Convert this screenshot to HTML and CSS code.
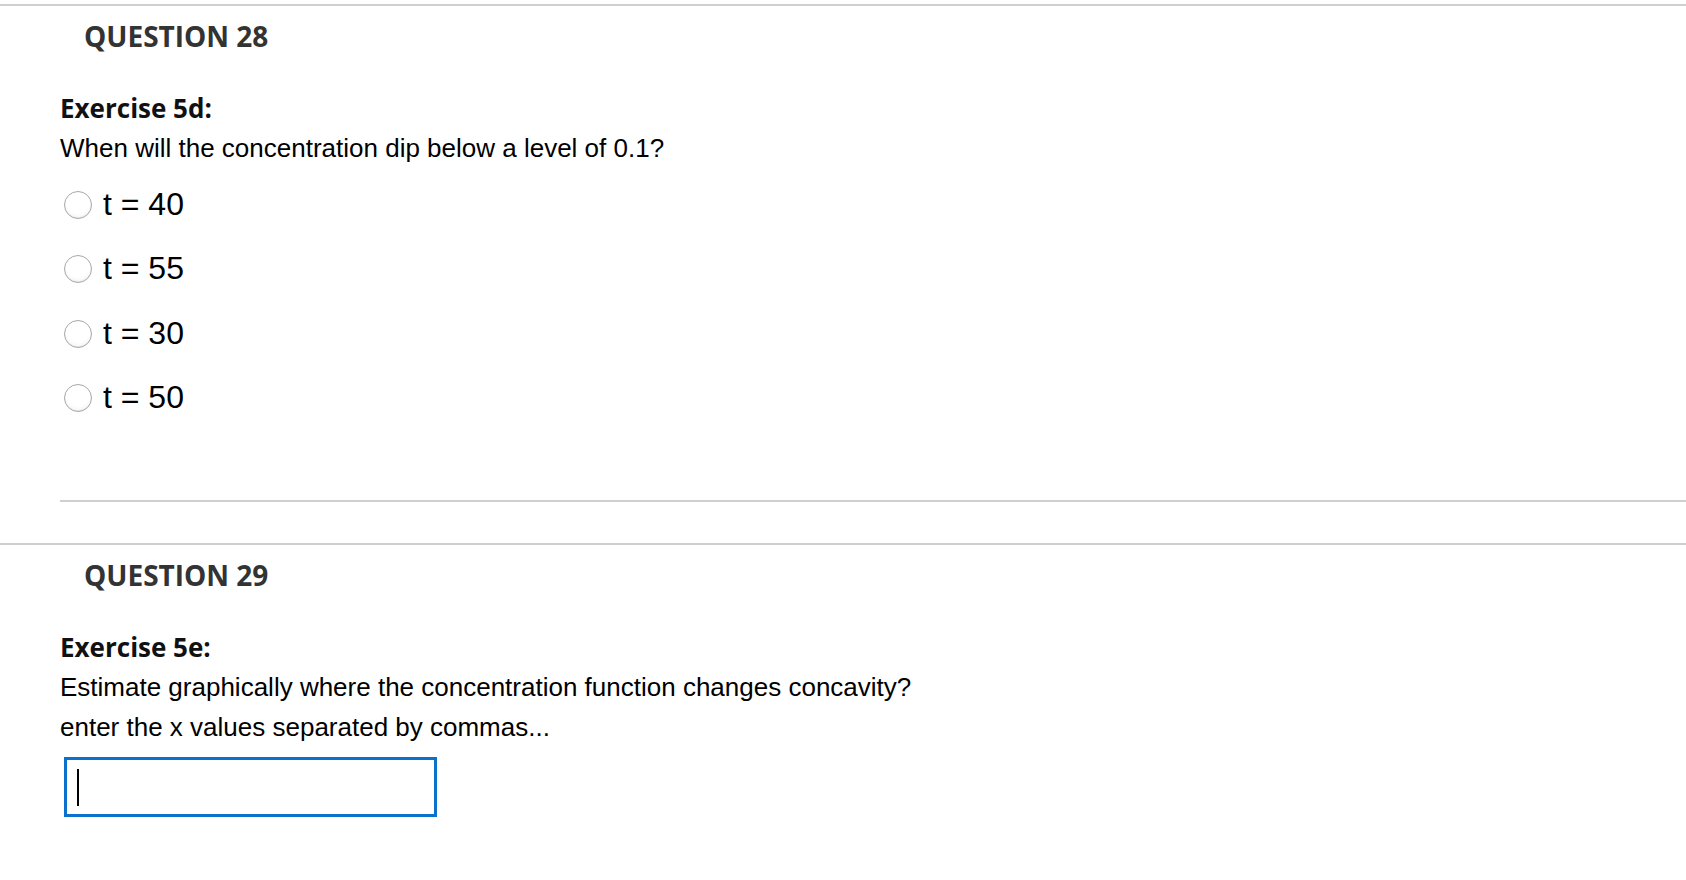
FILE: index.html
```html
<!DOCTYPE html>
<html lang="en">
<head>
<meta charset="utf-8">
<title>Questions</title>
<link rel="stylesheet" href="styles.css">
</head>
<body>
<section class="question">
  <h2 class="q-title">QUESTION 28</h2>
  <div class="q-body">
    <h3 class="exercise">Exercise 5d:</h3>
    <p class="prompt">When will the concentration dip below a level of 0.1?</p>
    <ul class="choices">
      <li class="choice"><input class="radio" type="radio" name="q28"><span class="choice-label">t = 40</span></li>
      <li class="choice"><input class="radio" type="radio" name="q28"><span class="choice-label">t = 55</span></li>
      <li class="choice"><input class="radio" type="radio" name="q28"><span class="choice-label">t = 30</span></li>
      <li class="choice"><input class="radio" type="radio" name="q28"><span class="choice-label">t = 50</span></li>
    </ul>
    <div class="q-sep"></div>
  </div>
</section>
<section class="question">
  <h2 class="q-title">QUESTION 29</h2>
  <div class="q-body">
    <h3 class="exercise">Exercise 5e:</h3>
    <p class="prompt">Estimate graphically where the concentration function changes concavity?</p>
    <p class="prompt">enter the x values separated by commas...</p>
    <div class="textbox"><span class="caret"></span></div>
  </div>
</section>
</body>
</html>
```

FILE: styles.css
```css
html, body {
  margin: 0;
  padding: 0;
  background: #ffffff;
}

body {
  padding-top: 4px;
  font-family: "Liberation Sans", Arial, Helvetica, sans-serif;
  color: #000000;
}

.question {
  border-top: 2px solid #cfcfcf;
}

.q-title {
  margin: 11px 0 0 0;
  padding-left: 84px;
  font-family: "Open Sans", "Liberation Sans", sans-serif;
  font-weight: 700;
  font-size: 28px;
  line-height: 38px;
  color: #333333;
}

.q-body {
  padding-left: 60px;
}

.exercise {
  margin: 33px 0 0 0;
  font-family: "Open Sans", "Liberation Sans", sans-serif;
  font-weight: 700;
  font-size: 26px;
  line-height: 40px;
  color: #111111;
}

.prompt {
  margin: 0;
  font-size: 26px;
  line-height: 40px;
  color: #000000;
}

.choices {
  list-style: none;
  margin: 4px 0 0 0;
  padding: 0;
}

.choice {
  display: flex;
  align-items: center;
  height: 64.3px;
  gap: 11px;
}

.radio {
  appearance: none;
  -webkit-appearance: none;
  margin: 2px 0 0 4px;
  width: 28px;
  height: 28px;
  border-radius: 50%;
  border: 1px solid #a8a8a8;
  background: radial-gradient(circle at 50% 35%, #ffffff 55%, #eeeeee 100%);
  box-shadow: inset 0 -1px 1px rgba(0, 0, 0, 0.05);
  box-sizing: border-box;
}

.choice-label {
  font-size: 32px;
  line-height: 40px;
  color: #000000;
}

.q-sep {
  margin-top: 71px;
  height: 2px;
  background: #cfcfcf;
  margin-bottom: 41px;
}

.textbox {
  margin: 10px 0 0 4px;
  width: 373px;
  height: 60px;
  box-sizing: border-box;
  border: 3px solid #0a72cc;
  display: flex;
  align-items: center;
  padding-left: 10px;
}

.caret {
  width: 2px;
  height: 37px;
  background: #000000;
}
```
